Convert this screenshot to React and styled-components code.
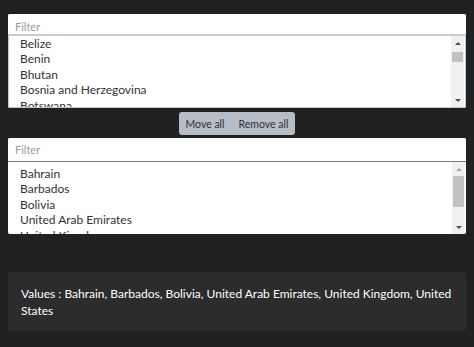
import React, { useEffect, useRef } from 'react';
import styled, { createGlobalStyle } from 'styled-components';

const available = [
  'Afghanistan',
  'Argentina',
  'Australia',
  'Bahamas',
  'Belgium',
  'Belize',
  'Benin',
  'Bhutan',
  'Bosnia and Herzegovina',
  'Botswana',
  'Brazil',
  'Canada',
  'China',
  'Denmark',
  'Egypt',
  'France',
  'Germany',
  'India',
  'Italy',
  'Japan',
  'Mexico',
  'Spain',
  'Sweden',
  'Switzerland',
];

const selected = [
  'Bahrain',
  'Barbados',
  'Bolivia',
  'United Arab Emirates',
  'United Kingdom',
  'United States',
];

const ITEM_HEIGHT = 15.4;

// the page is photographed without native scrollbars, so draw one
const ScrollBar = ({ thumbTop, thumbHeight, atTop }) => (
  <Bar>
    <BarButton>
      <Arrow $up $disabled={atTop} />
    </BarButton>
    <Track>
      <Thumb style={{ marginTop: thumbTop, height: thumbHeight }} />
    </Track>
    <BarButton>
      <Arrow />
    </BarButton>
  </Bar>
);

const App = () => {
  const topListRef = useRef(null);

  useEffect(() => {
    if (topListRef.current) {
      topListRef.current.scrollTop = 4 + 5 * ITEM_HEIGHT;
    }
  }, []);

  return (
    <>
      <GlobalStyle />
      <Page>
        <Picker>
          <FilterInput placeholder="Filter" $focused />
          <ListBox $focused>
            <Items ref={topListRef}>
              {available.map((name) => (
                <Item key={name} $inset>
                  {name}
                </Item>
              ))}
            </Items>
            <ScrollBar thumbTop={2} thumbHeight={10} />
          </ListBox>
        </Picker>

        <ButtonRow>
          <ButtonGroup>
            <GroupButton>Move all</GroupButton>
            <GroupButton>Remove all</GroupButton>
          </ButtonGroup>
        </ButtonRow>

        <Picker>
          <FilterInput placeholder="Filter" />
          <ListBox>
            <Items>
              {selected.map((name) => (
                <Item key={name}>{name}</Item>
              ))}
            </Items>
            <ScrollBar thumbTop={0} thumbHeight={31} atTop />
          </ListBox>
        </Picker>

        <Result>Values : {selected.join(', ')}</Result>
      </Page>
    </>
  );
};

export default App;

const GlobalStyle = createGlobalStyle`
  html, body {
    margin: 0;
    padding: 0;
    background: #212121;
  }

  body {
    font-family: Lato, 'Open Sans', sans-serif;
  }
`;

const Page = styled.div`
  padding: 14px 8px 0;
  display: flex;
  flex-direction: column;
`;

const Picker = styled.div`
  display: flex;
  flex-direction: column;
  background: #fff;
  border-radius: 2px;
  overflow: hidden;
`;

const FilterInput = styled.input`
  box-sizing: border-box;
  width: 100%;
  height: ${({ $focused }) => ($focused ? '22px' : '24px')};
  margin: 0;
  padding: ${({ $focused }) => ($focused ? '4px 7px 0' : '0 7px')};
  border: none;
  border-bottom: ${({ $focused }) => ($focused ? '2px solid #c3cdd9' : '1px solid #7d7d7d')};
  outline: none;
  font-family: Lato, sans-serif;
  font-size: 11px;
  color: #333;
  background: #fff;

  &::placeholder {
    color: #9a9a9a;
  }
`;

const ListBox = styled.div`
  box-sizing: border-box;
  display: flex;
  height: 72px;
  background: #fff;
  border: ${({ $focused }) => ($focused ? '1px solid #b9c6d4' : 'none')};
  border-top: none;
  border-radius: 0 0 2px 2px;
`;

const Items = styled.div`
  flex: 1;
  box-sizing: border-box;
  padding: 4px 0;
  overflow: hidden;
`;

const Item = styled.div`
  padding: 0 ${({ $inset }) => ($inset ? '11px' : '12px')};
  height: ${ITEM_HEIGHT}px;
  line-height: ${ITEM_HEIGHT}px;
  font-size: 12px;
  color: #333;
  white-space: nowrap;
`;

const Bar = styled.div`
  width: 13px;
  margin-right: 1px;
  display: flex;
  flex-direction: column;
  background: #f0f0f0;
`;

const BarButton = styled.div`
  height: 14px;
  display: flex;
  align-items: center;
  justify-content: center;
`;

const Arrow = styled.div`
  width: 0;
  height: 0;
  border-left: 3px solid transparent;
  border-right: 3px solid transparent;
  ${({ $up, $disabled }) =>
    $up
      ? `border-bottom: 3px solid ${$disabled ? '#a3a3a3' : '#505050'};`
      : 'border-top: 3px solid #505050;'}
`;

const Track = styled.div`
  flex: 1;
  display: flex;
  flex-direction: column;
  align-items: center;
`;

const Thumb = styled.div`
  width: 11px;
  background: #c2c2c2;
`;

const ButtonRow = styled.div`
  display: flex;
  justify-content: center;
  padding: 4px 0 3px;
`;

const ButtonGroup = styled.div`
  display: flex;
  background: #b6bdc6;
  border-radius: 3px;
  height: 23px;
`;

const GroupButton = styled.button`
  border: none;
  background: transparent;
  padding: 0 7px;
  font-family: Lato, sans-serif;
  font-size: 10.5px;
  color: #333;
  cursor: pointer;
`;

const Result = styled.div`
  margin-top: 38px;
  padding: 13px 13px 12px;
  background: #2c2c2c;
  border-radius: 3px;
  color: #ffffff;
  font-size: 12px;
  line-height: 17px;
`;
